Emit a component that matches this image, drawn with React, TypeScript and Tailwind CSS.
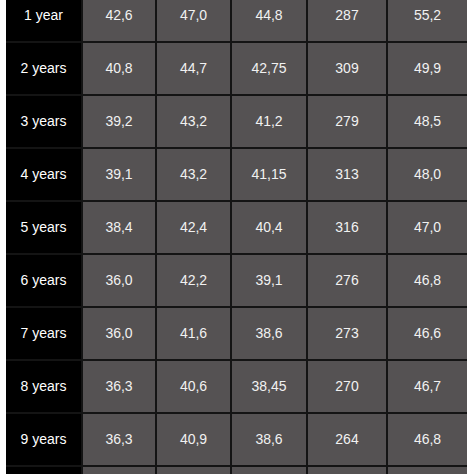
import React from 'react';

const rows: [string, string, string, string, string, string][] = [
    ['1 year', '42,6', '47,0', '44,8', '287', '55,2'],
    ['2 years', '40,8', '44,7', '42,75', '309', '49,9'],
    ['3 years', '39,2', '43,2', '41,2', '279', '48,5'],
    ['4 years', '39,1', '43,2', '41,15', '313', '48,0'],
    ['5 years', '38,4', '42,4', '40,4', '316', '47,0'],
    ['6 years', '36,0', '42,2', '39,1', '276', '46,8'],
    ['7 years', '36,0', '41,6', '38,6', '273', '46,6'],
    ['8 years', '36,3', '40,6', '38,45', '270', '46,7'],
    ['9 years', '36,3', '40,9', '38,6', '264', '46,8'],
    ['', '', '', '', '', ''],
];

const App = () => {
    return (
        <div className="h-[474px] w-[474px] overflow-hidden bg-white pl-[6px] font-['Liberation_Sans',Arial,sans-serif]">
            <div className="-mt-[10px] grid w-[461px] grid-cols-[75px_72px_73px_74px_78px_79px] gap-[2px] bg-[#141414]">
                {rows.map((row) =>
                    row.map((cell, i) => (
                        <div
                            key={`${row[0]}-${i}`}
                            className={
                                i === 0
                                    ? 'flex h-[51px] items-center justify-center bg-black text-[14px] text-white'
                                    : 'flex h-[51px] items-center justify-center bg-[#555253] text-[14px] text-[#f1f1f1]'
                            }
                        >
                            {cell}
                        </div>
                    ))
                )}
            </div>
        </div>
    );
};

export default App;
